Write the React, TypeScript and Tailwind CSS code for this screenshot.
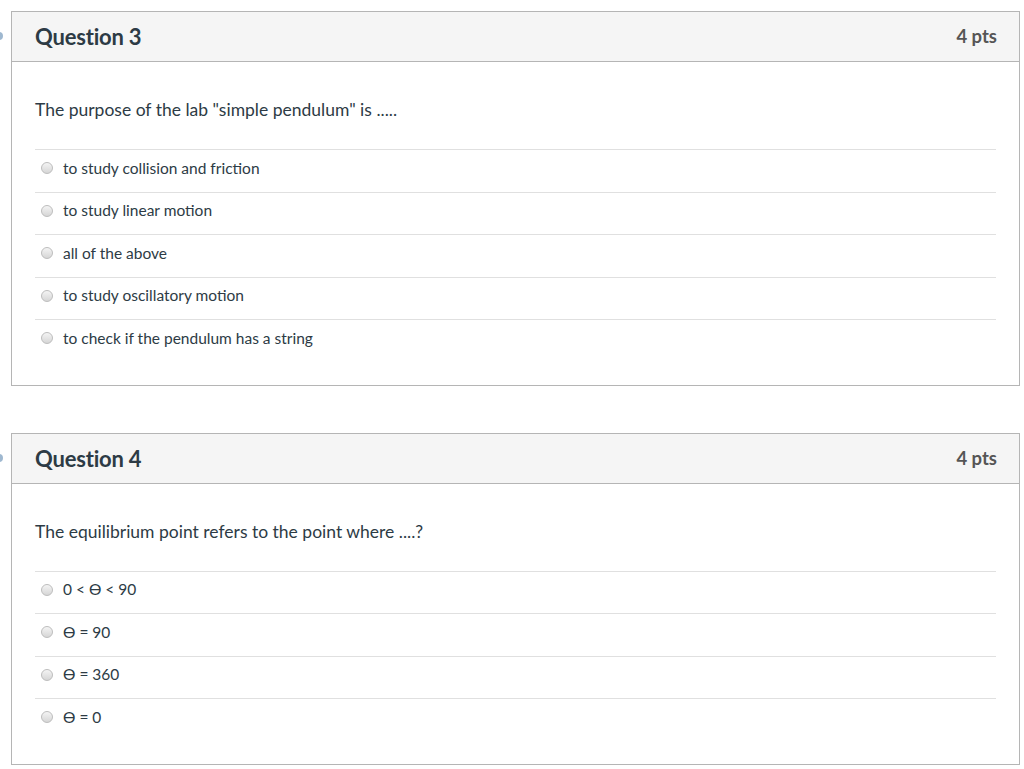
import React from 'react';

type Question = {
  title: string;
  points: string;
  prompt: string;
  answers: string[];
};

const questions: Question[] = [
  {
    title: 'Question 3',
    points: '4 pts',
    prompt: 'The purpose of the lab "simple pendulum" is .....',
    answers: [
      'to study collision and friction',
      'to study linear motion',
      'all of the above',
      'to study oscillatory motion',
      'to check if the pendulum has a string',
    ],
  },
  {
    title: 'Question 4',
    points: '4 pts',
    prompt: 'The equilibrium point refers to the point where ....?',
    answers: ['0 < ϴ < 90', 'ϴ = 90', 'ϴ = 360', 'ϴ = 0'],
  },
];

function Radio() {
  return (
    <span className="w-[12px] h-[12px] rounded-full border border-[#bdbdbd] bg-gradient-to-b from-[#f4f4f4] to-[#d6d6d6] shrink-0" />
  );
}

function QuestionCard({ q }: { q: Question }) {
  return (
    <div className="relative border border-[#b5b5b5] bg-white">
      {/* bookmark marker, cut off by the window edge */}
      <span className="absolute -left-[17px] top-[20px] w-[8px] h-[8px] rounded-full bg-[#9fb8d0]" />
      <div className="h-[50px] bg-[#f5f5f5] border-b border-[#b5b5b5] flex items-center justify-between pl-[23px] pr-[22px]">
        <h2 className="text-[22px] font-bold text-[#2d3b45] tracking-[-0.2px]">{q.title}</h2>
        <span className="text-[18.5px] font-bold text-[#555555] pt-[1px]">{q.points}</span>
      </div>
      <div className="px-[23px] pt-[36px] pb-[23px]">
        <p className="text-[17.5px] leading-[24px] text-[#2d3b45] mb-[27px]">{q.prompt}</p>
        <div>
          {q.answers.map((a) => (
            <div key={a} className="h-[42.5px] border-t border-[#e0e0e0] flex items-center pl-[6px] gap-[10px] pb-[5px]">
              <Radio />
              <span className="text-[15.5px] text-[#2d3b45]">{a}</span>
            </div>
          ))}
        </div>
      </div>
    </div>
  );
}

export default function App() {
  return (
    <div className="min-h-screen bg-white pl-[11px] pr-[4px] pt-[11px] overflow-hidden" style={{ fontFamily: 'Lato, "Noto Sans", sans-serif' }}>
      <div className="flex flex-col gap-[47px]">
        {questions.map((q) => (
          <QuestionCard key={q.title} q={q} />
        ))}
      </div>
    </div>
  );
}
